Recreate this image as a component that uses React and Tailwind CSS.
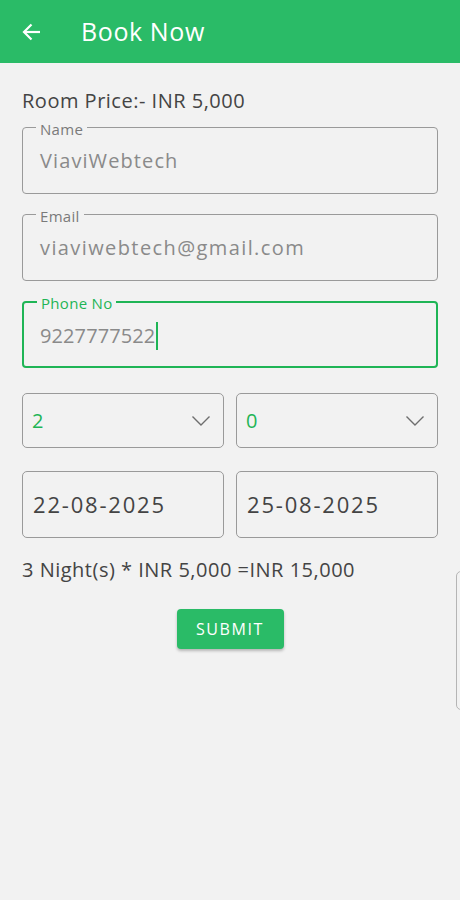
import { useState } from 'react';

const font = { fontFamily: '"Open Sans", "Noto Sans", sans-serif' };

function Outlined({ label, value, focused = false, spacing = 'tracking-[1px]' }) {
  return (
    <div
      className={`relative flex h-[67px] items-start rounded-[4px] pl-[17px] ${focused ? 'border-2 border-[#1fb556]' : 'border border-[#9a9a9a]'}`}
    >
      <span
        className={`absolute left-[13px] top-[-8px] bg-[#f2f2f2] px-[4px] text-[15px] leading-[18px] tracking-[0.3px] ${focused ? 'left-[12px] top-[-9px] text-[#1fb556]' : 'text-[#7a7a7a]'}`}
      >
        {label}
      </span>
      <div className={`flex items-center text-[20px] leading-[26px] text-[#8a8a8a] ${spacing} ${focused ? 'mt-[19px] ml-[-1px]' : 'mt-[20px]'}`}>
        {value}
        {focused && <span className="ml-[1px] inline-block h-[28px] w-[2px] bg-[#1fb556]" />}
      </div>
    </div>
  );
}

function Chevron() {
  return (
    <svg width="20" height="12" viewBox="0 0 20 12" fill="none" stroke="#6e6e6e" strokeWidth="1.4">
      <path d="M1.5 1.5 L10 10 L18.5 1.5" />
    </svg>
  );
}

function Select({ value }) {
  return (
    <div className="flex h-[55px] flex-1 items-center justify-between rounded-[5px] border border-[#9a9a9a] pl-[9px] pr-[12px]">
      <span className="text-[20px] text-[#1fb556]">{value}</span>
      <Chevron />
    </div>
  );
}

function DateBox({ value }) {
  return (
    <div className="flex h-[67px] flex-1 items-center rounded-[5px] border border-[#9a9a9a] pl-[10px]">
      <span className="text-[22px] tracking-[1.8px] text-[#444444]">{value}</span>
    </div>
  );
}

export default function App() {
  const [nights] = useState(3);

  return (
    <div className="relative min-h-[900px] bg-[#f2f2f2]" style={font}>
      {/* top bar */}
      <div className="flex h-[63px] items-center bg-[#2abb67] pl-[22px]">
        <svg width="19" height="18" viewBox="0 0 19 18" fill="none" stroke="white" strokeWidth="2.2">
          <path d="M18 9 H2" />
          <path d="M9.5 1.5 L2 9 L9.5 16.5" />
        </svg>
        <h1 className="ml-[40px] text-[25px] font-medium tracking-[0.6px] text-white">Book Now</h1>
      </div>

      <div className="flex flex-col px-[22px]">
        <p className="mt-[26px] text-[20px] leading-[24px] tracking-[0.5px] text-[#444444]">Room Price:- INR 5,000</p>

        <div className="mt-[14px] flex flex-col gap-[20px]">
          <Outlined label="Name" value="ViaviWebtech" spacing="tracking-[1.1px]" />
          <Outlined label="Email" value="viaviwebtech@gmail.com" spacing="tracking-[1.4px]" />
          <Outlined label="Phone No" value="9227777522" focused spacing="tracking-[0.1px]" />
        </div>

        <div className="mt-[25px] flex gap-[12px]">
          <Select value="2" />
          <Select value="0" />
        </div>

        <div className="mt-[23px] flex gap-[12px]">
          <DateBox value="22-08-2025" />
          <DateBox value="25-08-2025" />
        </div>

        <p className="mt-[20px] text-[20px] leading-[24px] tracking-[0.5px] text-[#444444]">
          {nights} Night(s) * INR 5,000 =INR 15,000
        </p>

        <div className="mt-[27px] flex justify-center">
          <button className="h-[40px] w-[107px] rounded-[4px] bg-[#2abb67] text-[16px] font-medium tracking-[1.6px] text-white shadow-[0_2px_3px_rgba(0,0,0,0.25)]">
            SUBMIT
          </button>
        </div>
      </div>

      {/* edge handle */}
      <div className="absolute left-[456px] top-[571px] h-[139px] w-[12px] rounded-[5px] border border-[#b5b5b5]" />
    </div>
  );
}
